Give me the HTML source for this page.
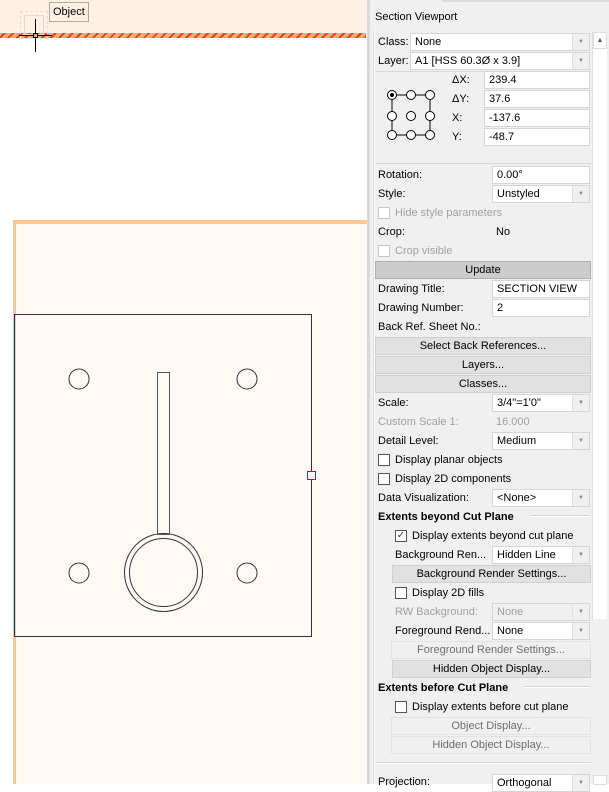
<!DOCTYPE html>
<html><head><meta charset="utf-8"><style>
*{box-sizing:border-box;margin:0;padding:0}
body{width:609px;height:784px;overflow:hidden;position:relative;background:#fff;font-family:"Liberation Sans",Tahoma,sans-serif;font-size:11px;color:#000}
.a{position:absolute;white-space:nowrap}
.lbl{position:absolute;left:378px;line-height:18px}
.g{color:#a0a0a0}
.fld{position:absolute;height:18px;background:#fff;border:1px solid #d6d6d6;padding-left:4px;line-height:16px}
.dd{position:absolute;width:17px;height:16px;top:0;right:0;background:#f0f0f0;border-left:1px solid #e0e0e0;font-size:6px;color:#888;text-align:center;line-height:16px}
.btn{position:absolute;height:18px;background:#e1e1e1;border:1px solid #d0d0d0;text-align:center;line-height:16px}
.btn.d{background:#f0f0f0;border-color:#e3e3e3;color:#6d6d6d}
.cb{position:absolute;width:12px;height:12px;border:1px solid #555;background:#fff}
.cb.d{border-color:#c8c8c8}
.hd{position:absolute;left:378px;font-weight:bold;line-height:16px}
.hl{position:absolute;height:2px;border-top:1px solid #d5d5d5;border-bottom:1px solid #fff}
#p{position:absolute;left:0;top:1px;width:609px;height:784px}
</style></head><body>
<!-- drawing area -->
<div class="a" style="left:0;top:0;width:368px;height:35px;background:#fff1e4"></div>
<div class="a" style="left:0;top:33px;width:366px;height:5px;background:repeating-linear-gradient(-45deg,#ff4000 0 2px,#c8b09a 2px 4px,#ffb070 4px 6px)"></div>
<div class="a" style="left:13px;top:220px;width:354px;height:564px;background:#fff9f5;border-top:4px solid #ffc890;border-left:3px solid #ffc890"></div>
<div class="a" style="left:20px;top:11px;width:28px;height:28px;border:1px dashed #e6dcd2"></div>
<div class="a" style="left:24px;top:15px;width:20px;height:20px;border:1px solid #e2d8cc"></div>
<div class="a" style="left:35px;top:19px;width:1px;height:33px;background:#000"></div>
<div class="a" style="left:19px;top:35px;width:33px;height:1px;background:#000"></div>
<div class="a" style="left:33px;top:33px;width:5px;height:5px;border:1px solid #000;background:#c9a88a"></div>
<div class="a" style="left:49px;top:2px;height:20px;padding:0 3px;border:1px solid #b8a898;background:#fff1e4;line-height:18px;font-size:11px">Object</div>
<svg class="a" style="left:0;top:0" width="368" height="784">
<rect x="14.5" y="314.5" width="297" height="322" fill="none" stroke="#333" stroke-width="1"/>
<g fill="none" stroke="#333" stroke-width="1">
<circle cx="79" cy="379" r="10"/><circle cx="247" cy="379" r="10"/>
<circle cx="79" cy="573" r="10"/><circle cx="247" cy="573" r="10"/>
<circle cx="163.5" cy="572.5" r="39"/><circle cx="163.5" cy="572.5" r="34"/>
<rect x="157.5" y="372.5" width="12" height="162" stroke="#555"/>
</g>
<rect x="307.5" y="471.5" width="8" height="8" fill="#fff" stroke="#d00"/>
</svg>
<!-- panel -->
<div class="a" style="left:367px;top:0;width:3px;height:784px;background:#d9d9d9"></div>
<div class="a" style="left:370px;top:0;width:239px;height:784px;background:#f0f0f0"></div>
<div class="a" style="left:442px;top:0;width:167px;height:2px;background:#dadada"></div>
<div class="a" style="left:375px;top:9px;line-height:16px">Section Viewport</div>
<div class="a" style="left:373px;top:31px;width:2px;height:753px;background:#e0e0e0;border-right:1px solid #fff"></div>
<div class="a" style="left:592px;top:32px;width:15px;height:587px;background:#fff;border-left:1px solid #e0e0e0"></div>
<div class="a" style="left:593px;top:32px;width:14px;height:17px;background:#fff;border:1px solid #ddd;font-size:7px;color:#555;text-align:center;line-height:15px">▲</div>
<div id="p">
<div class="lbl" style="top:32px">Class:</div>
<div class="fld" style="left:410px;top:32px;width:180px">None<div class="dd">▼</div></div>
<div class="lbl" style="top:51px">Layer:</div>
<div class="fld" style="left:410px;top:51px;width:180px">A1 [HSS 60.3Ø x 3.9]<div class="dd">▼</div></div>
<div class="a" style="left:375px;top:70px;width:216px;height:1px;background:#d8d8d8"></div>
<svg class="a" style="left:384px;top:86px" width="56" height="56">
<g stroke="#000" fill="#fff"><path d="M8 8H46V48H8Z" fill="none"/>
<circle cx="8" cy="8" r="4.5"/><circle cx="27" cy="8" r="4.5"/><circle cx="46" cy="8" r="4.5"/>
<circle cx="8" cy="29" r="4.5"/><circle cx="27" cy="29" r="4.5"/><circle cx="46" cy="29" r="4.5"/>
<circle cx="8" cy="48" r="4.5"/><circle cx="27" cy="48" r="4.5"/><circle cx="46" cy="48" r="4.5"/></g>
<circle cx="8" cy="8" r="2" fill="#000"/></svg>
<div class="a" style="left:452px;top:70px;line-height:18px">ΔX:</div>
<div class="fld" style="left:484px;top:70px;width:106px">239.4</div>
<div class="a" style="left:452px;top:89px;line-height:18px">ΔY:</div>
<div class="fld" style="left:484px;top:89px;width:106px">37.6</div>
<div class="a" style="left:452px;top:108px;line-height:18px">X:</div>
<div class="fld" style="left:484px;top:108px;width:106px">-137.6</div>
<div class="a" style="left:452px;top:127px;line-height:18px">Y:</div>
<div class="fld" style="left:484px;top:127px;width:106px">-48.7</div>
<div class="a" style="left:375px;top:162px;width:216px;height:1px;background:#d8d8d8"></div>

<div class="lbl" style="top:165px">Rotation:</div>
<div class="fld" style="left:492px;top:165px;width:98px">0.00°</div>
<div class="lbl" style="top:184px">Style:</div>
<div class="fld" style="left:492px;top:184px;width:98px">Unstyled<div class="dd">▼</div></div>
<div class="cb d" style="left:378px;top:206px"></div><div class="a g" style="left:395px;top:203px;line-height:18px">Hide style parameters</div>
<div class="lbl" style="top:222px">Crop:</div><div class="a" style="left:496px;top:222px;line-height:18px">No</div>
<div class="cb d" style="left:378px;top:244px"></div><div class="a g" style="left:395px;top:241px;line-height:18px">Crop visible</div>
<div class="btn" style="left:375px;top:260px;width:216px;background:#cccccc;border-color:#adadad">Update</div>
<div class="lbl" style="top:279px">Drawing Title:</div>
<div class="fld" style="left:492px;top:279px;width:98px">SECTION VIEW</div>
<div class="lbl" style="top:298px">Drawing Number:</div>
<div class="fld" style="left:492px;top:298px;width:98px">2</div>
<div class="lbl" style="top:317px">Back Ref. Sheet No.:</div>
<div class="btn" style="left:375px;top:336px;width:216px">Select Back References...</div>
<div class="btn" style="left:375px;top:355px;width:216px">Layers...</div>
<div class="btn" style="left:375px;top:374px;width:216px">Classes...</div>
<div class="lbl" style="top:393px">Scale:</div>
<div class="fld" style="left:492px;top:393px;width:98px">3/4"=1'0"<div class="dd">▼</div></div>
<div class="lbl g" style="top:412px">Custom Scale 1:</div><div class="a g" style="left:496px;top:412px;line-height:18px">16.000</div>
<div class="lbl" style="top:431px">Detail Level:</div>
<div class="fld" style="left:492px;top:431px;width:98px">Medium<div class="dd">▼</div></div>
<div class="cb" style="left:378px;top:453px"></div><div class="a" style="left:395px;top:450px;line-height:18px">Display planar objects</div>
<div class="cb" style="left:378px;top:472px"></div><div class="a" style="left:395px;top:469px;line-height:18px">Display 2D components</div>
<div class="lbl" style="top:488px">Data Visualization:</div>
<div class="fld" style="left:492px;top:488px;width:98px">&lt;None&gt;<div class="dd">▼</div></div>

<div class="hd" style="top:508px">Extents beyond Cut Plane</div>
<div class="hl" style="left:530px;top:514px;width:60px"></div>
<div class="cb" style="left:395px;top:529px;font-size:10px;line-height:10px;text-align:center;color:#333">✓</div><div class="a" style="left:412px;top:526px;line-height:18px">Display extents beyond cut plane</div>
<div class="a" style="left:395px;top:545px;line-height:18px">Background Ren...</div>
<div class="fld" style="left:492px;top:545px;width:98px">Hidden Line<div class="dd">▼</div></div>
<div class="btn" style="left:392px;top:564px;width:199px">Background Render Settings...</div>
<div class="cb" style="left:395px;top:586px"></div><div class="a" style="left:412px;top:583px;line-height:18px">Display 2D fills</div>
<div class="a g" style="left:395px;top:602px;line-height:18px">RW Background:</div>
<div class="fld" style="left:492px;top:602px;width:98px;background:#f0f0f0;color:#a0a0a0">None<div class="dd">▼</div></div>
<div class="a" style="left:395px;top:621px;line-height:18px">Foreground Rend...</div>
<div class="fld" style="left:492px;top:621px;width:98px">None<div class="dd">▼</div></div>
<div class="btn d" style="left:391px;top:640px;width:200px">Foreground Render Settings...</div>
<div class="btn" style="left:392px;top:659px;width:199px">Hidden Object Display...</div>
<div class="hd" style="top:679px">Extents before Cut Plane</div>
<div class="hl" style="left:524px;top:685px;width:66px"></div>
<div class="cb" style="left:395px;top:700px"></div><div class="a" style="left:412px;top:697px;line-height:18px">Display extents before cut plane</div>
<div class="btn d" style="left:391px;top:716px;width:200px">Object Display...</div>
<div class="btn d" style="left:391px;top:735px;width:200px">Hidden Object Display...</div>
<div class="hl" style="left:375px;top:761px;width:216px"></div>
<div class="lbl" style="top:772px">Projection:</div>
<div class="fld" style="left:492px;top:773px;width:98px">Orthogonal<div class="dd">▼</div></div>
<div class="a" style="left:593px;top:774px;width:14px;height:10px;background:#fff;border:1px solid #ddd"></div>
</div>
</body></html>
